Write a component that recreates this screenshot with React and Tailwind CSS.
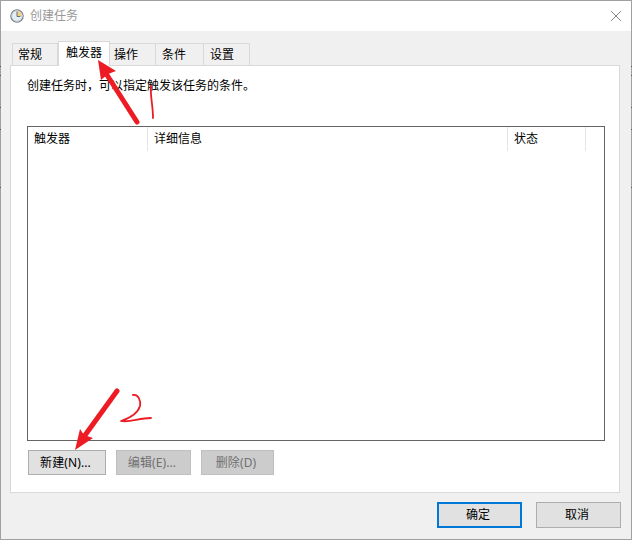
const edgeMarks = [
  'top-[65px]',
  'top-[74px]',
  'top-[106px]',
  'top-[128px]',
  'top-[186px]',
];

function ClockIcon() {
  return (
    <svg className="h-[14px] w-[14px]" viewBox="0 0 14 14">
      <circle cx="7" cy="7" r="6.2" fill="#e4eef5" stroke="#777b80" strokeWidth="1.1" />
      <path d="M7 7V2a5 5 0 0 1 5 5Z" fill="#f6cf80" />
      <circle cx="7" cy="7" r="4.9" fill="none" stroke="#c3ced6" strokeWidth=".7" />
      <path d="M7 2.6V7.5H10.4" fill="none" stroke="#66707a" strokeWidth="1" />
    </svg>
  );
}

function Tab({ label, className }) {
  return (
    <div className={`h-[22px] border-t border-r border-[#d9d9d9] bg-[#f0f0f0] leading-[22px] ${className}`}>
      {label}
    </div>
  );
}

function Button({ label, className }) {
  return (
    <button className={`flex items-center justify-center pr-[3px] ${className}`}>{label}</button>
  );
}

function Annotations() {
  return (
    <svg className="pointer-events-none absolute -top-px -left-px z-20 h-[540px] w-[632px]" viewBox="0 0 632 540">
      <g fill="none" stroke="#ed1c24" strokeLinecap="round" strokeLinejoin="round">
        <path d="M137 122L107 75" strokeWidth="5" />
        <path d="M117 391L83 438" strokeWidth="5" />
        <path d="M151 86C150 96 153 105 153 118" strokeWidth="1.8" />
        <path d="M133 395C138 394 141 400 140 406C138 413 130 418 121 421C129 423 139 418 151 418" strokeWidth="1.8" />
      </g>
      <path d="M98 60L116 71L108 74L101 80Z" fill="#ed1c24" />
      <path d="M75 450L80 429L84 435L93 438Z" fill="#ed1c24" />
    </svg>
  );
}

export default function App() {
  return (
    <div lang="zh-CN" className="relative flex h-[540px] w-[632px] flex-col border border-[#a0a0a0] bg-[#f0f0f0] font-['Noto_Sans','Noto_Sans_CJK_SC',sans-serif] text-[12px] text-black">
      <header className="flex h-[30px] shrink-0 items-center bg-white pr-[9px] pl-[9px]">
        <ClockIcon />
        <span className="ml-[6px] text-[#999999]">创建任务</span>
        <svg className="mb-px ml-auto h-[12px] w-[12px]" viewBox="0 0 12 12">
          <path d="M1 1L11 11M11 1L1 11" fill="none" stroke="#888" strokeWidth="1" />
        </svg>
      </header>

      <nav className="z-10 -mb-px ml-[11px] flex h-[25px] shrink-0 items-end pb-px mt-[10px]">
        <Tab label="常规" className="w-[46px] border-l pl-[5px]" />
        <div className="-mb-px h-[25px] w-[52px] border-t border-r border-l border-[#d9d9d9] bg-white pl-[7px] leading-[22px]">
          触发器
        </div>
        <Tab label="操作" className="w-[46px] pl-[4px]" />
        <Tab label="条件" className="w-[48px] pl-[6px]" />
        <Tab label="设置" className="w-[46px] pl-[6px]" />
      </nav>

      <main className="mx-[9px] flex h-[428px] w-[610px] shrink-0 flex-col border border-[#d9d9d9] bg-white px-[16px]">
        <p className="mt-[11px] h-[18px] leading-[18px]">创建任务时，可以指定触发该任务的条件。</p>
        <div className="mt-[31px] h-[315px] w-[578px] border border-[#646464] bg-white">
          <div className="flex h-[24px] leading-[23px]">
            <div className="w-[120px] border-r border-[#e5e5e5] pl-[6px]">触发器</div>
            <div className="w-[360px] border-r border-[#e5e5e5] pl-[6px]">详细信息</div>
            <div className="w-[78px] border-r border-[#e5e5e5] pl-[6px]">状态</div>
          </div>
        </div>
        <div className="mt-[9px] ml-px flex gap-[10px] tracking-[0.1px]">
          <Button label="新建(N)..." className="h-[25px] w-[78px] border border-[#adadad] bg-[#e1e1e1]" />
          <Button label="编辑(E)..." className="h-[25px] w-[75px] border border-[#bfbfbf] bg-[#cccccc] text-[#707070]" />
          <Button label="删除(D)" className="h-[25px] w-[73px] border border-[#bfbfbf] bg-[#cccccc] text-[#707070]" />
        </div>
      </main>

      <footer className="mt-[9px] mr-[10px] flex justify-end gap-[14px]">
        <Button label="确定" className="h-[26px] w-[85px] border-2 border-[#0078d7] bg-[#e1e1e1]" />
        <Button label="取消" className="h-[26px] w-[85px] border border-[#adadad] bg-[#e1e1e1]" />
      </footer>

      {edgeMarks.map((top) => (
        <div key={top} className={`absolute -right-px -left-px h-px border-x border-[#555555] ${top}`} />
      ))}
      <Annotations />
    </div>
  );
}
